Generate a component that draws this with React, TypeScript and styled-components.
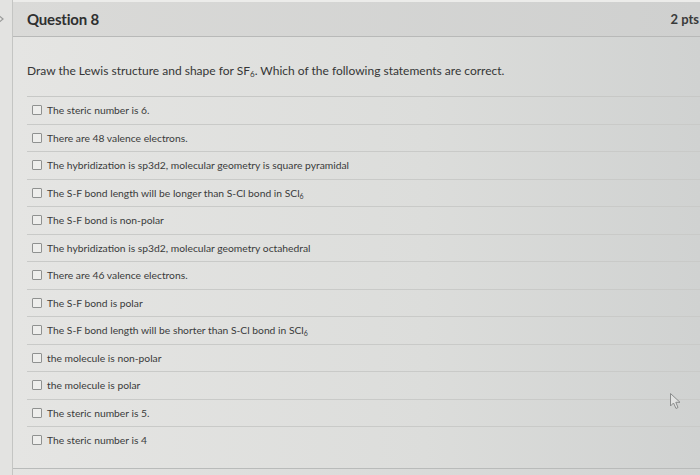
import React from 'react';
import styled, { createGlobalStyle } from "styled-components";

type OptionType = {
	text: React.ReactNode
}

const options: OptionType[] = [
	{ text: "The steric number is 6." },
	{ text: "There are 48 valence electrons." },
	{ text: "The hybridization is sp3d2, molecular geometry is square pyramidal" },
	{ text: <>The S-F bond length will be longer than S-Cl bond in SCl<sub>6</sub></> },
	{ text: "The S-F bond is non-polar" },
	{ text: "The hybridization is sp3d2, molecular geometry octahedral" },
	{ text: "There are 46 valence electrons." },
	{ text: "The S-F bond is polar" },
	{ text: <>The S-F bond length will be shorter than S-Cl bond in SCl<sub>6</sub></> },
	{ text: "the molecule is non-polar" },
	{ text: "the molecule is polar" },
	{ text: "The steric number is 5." },
	{ text: "The steric number is 4" },
]

export default function App() {
	return (
		<>
			<GlobalStyle />
			<Page>
				<Gutter>
					<Chevron width="8" height="14" viewBox="0 0 8 14">
						<path d="M-2 3 L3 7 L-2 11" fill="none" stroke="#9a9b9a" strokeWidth="1.2" />
					</Chevron>
				</Gutter>
				<Card>
					<Header>
						<Title>Question 8</Title>
						<Points>2 pts</Points>
					</Header>
					<Body>
						<Prompt>
							Draw the Lewis structure and shape for SF<sub>6</sub>. Which of the following statements are correct.
						</Prompt>
						<Answers>
							{options.map((o, i) => (
								<Answer key={i}>
									<Box />
									<AnswerText>{o.text}</AnswerText>
								</Answer>
							))}
						</Answers>
					</Body>
					<Cursor width="14" height="18" viewBox="0 0 14 18">
						<path d="M1.5 1.5 L1.5 14 L4.5 11 L7 16.5 L9 15.5 L6.8 10.3 L11 10.3 Z" fill="#e2e3e2" stroke="#8a8c8c" strokeWidth="1" strokeLinejoin="round" />
					</Cursor>
				</Card>
			</Page>
		</>
	);
}

const GlobalStyle = createGlobalStyle`
	body {
		margin: 0;
		font-family: Lato, "Open Sans", sans-serif;
		background: #dcdddb;
	}
`

const Page = styled.div`
	display: flex;
	width: 700px;
	height: 475px;
	overflow: hidden;
	background: linear-gradient(to right, #e4e4e2, #d2d4d3);
`

const Gutter = styled.div`
	width: 12px;
	flex-shrink: 0;
	background: #e3e3e1;
	border-right: 1px solid #c4c5c3;
`

const Chevron = styled.svg`
	display: block;
	margin-top: 12px;
`

const Card = styled.div`
	position: relative;
	flex: 1;
	display: flex;
	flex-direction: column;
	height: 466px;
	border-bottom: 1px solid #b9bbba;
	border-top: 2px solid #ececea;
`

const Header = styled.div`
	display: flex;
	align-items: center;
	justify-content: space-between;
	height: 34px;
	padding: 0 1px 0 14px;
	background: linear-gradient(to right, #dadad8, #cfd0cf);
	border-bottom: 1px solid #b8b9b8;
`

const Title = styled.h2`
	margin: 0;
	font-size: 15px;
	font-weight: 700;
	color: #2f3030;
	letter-spacing: -0.2px;
`

const Points = styled.span`
	font-size: 13px;
	font-weight: 700;
	color: #3a3b3b;
`

const Body = styled.div`
	display: flex;
	flex-direction: column;
	padding: 0 0 0 14px;
	background: linear-gradient(to right, #e5e5e3 0%, #dcdddb 60%, #d0d2d1 100%);
	flex: 1;
`

const Prompt = styled.p`
	margin: 0;
	padding: 26px 0 17px;
	font-size: 12px;
	line-height: 16px;
	color: #353636;

	sub {
		font-size: 8px;
		vertical-align: -2px;
		line-height: 0;
	}
`

const Answers = styled.ul`
	list-style: none;
	margin: 0;
	padding: 0;
	border-top: 1px solid #c7c8c6;
`

const Answer = styled.li`
	display: flex;
	align-items: center;
	gap: 5px;
	height: 26.5px;
	padding-left: 5px;
	border-bottom: 1px solid #c9cac8;

	&:last-child {
		border-bottom: none;
	}
`

const Box = styled.span`
	width: 8px;
	height: 8px;
	border: 1px solid #8f9190;
	border-radius: 1px;
	background: #eeeeec;
	flex-shrink: 0;
`

const AnswerText = styled.span`
	font-size: 10.3px;
	color: #3a3b3b;
	line-height: 12px;

	sub {
		font-size: 7px;
		vertical-align: -2px;
		line-height: 0;
	}
`

const Cursor = styled.svg`
	position: absolute;
	left: 656px;
	top: 390px;
`
